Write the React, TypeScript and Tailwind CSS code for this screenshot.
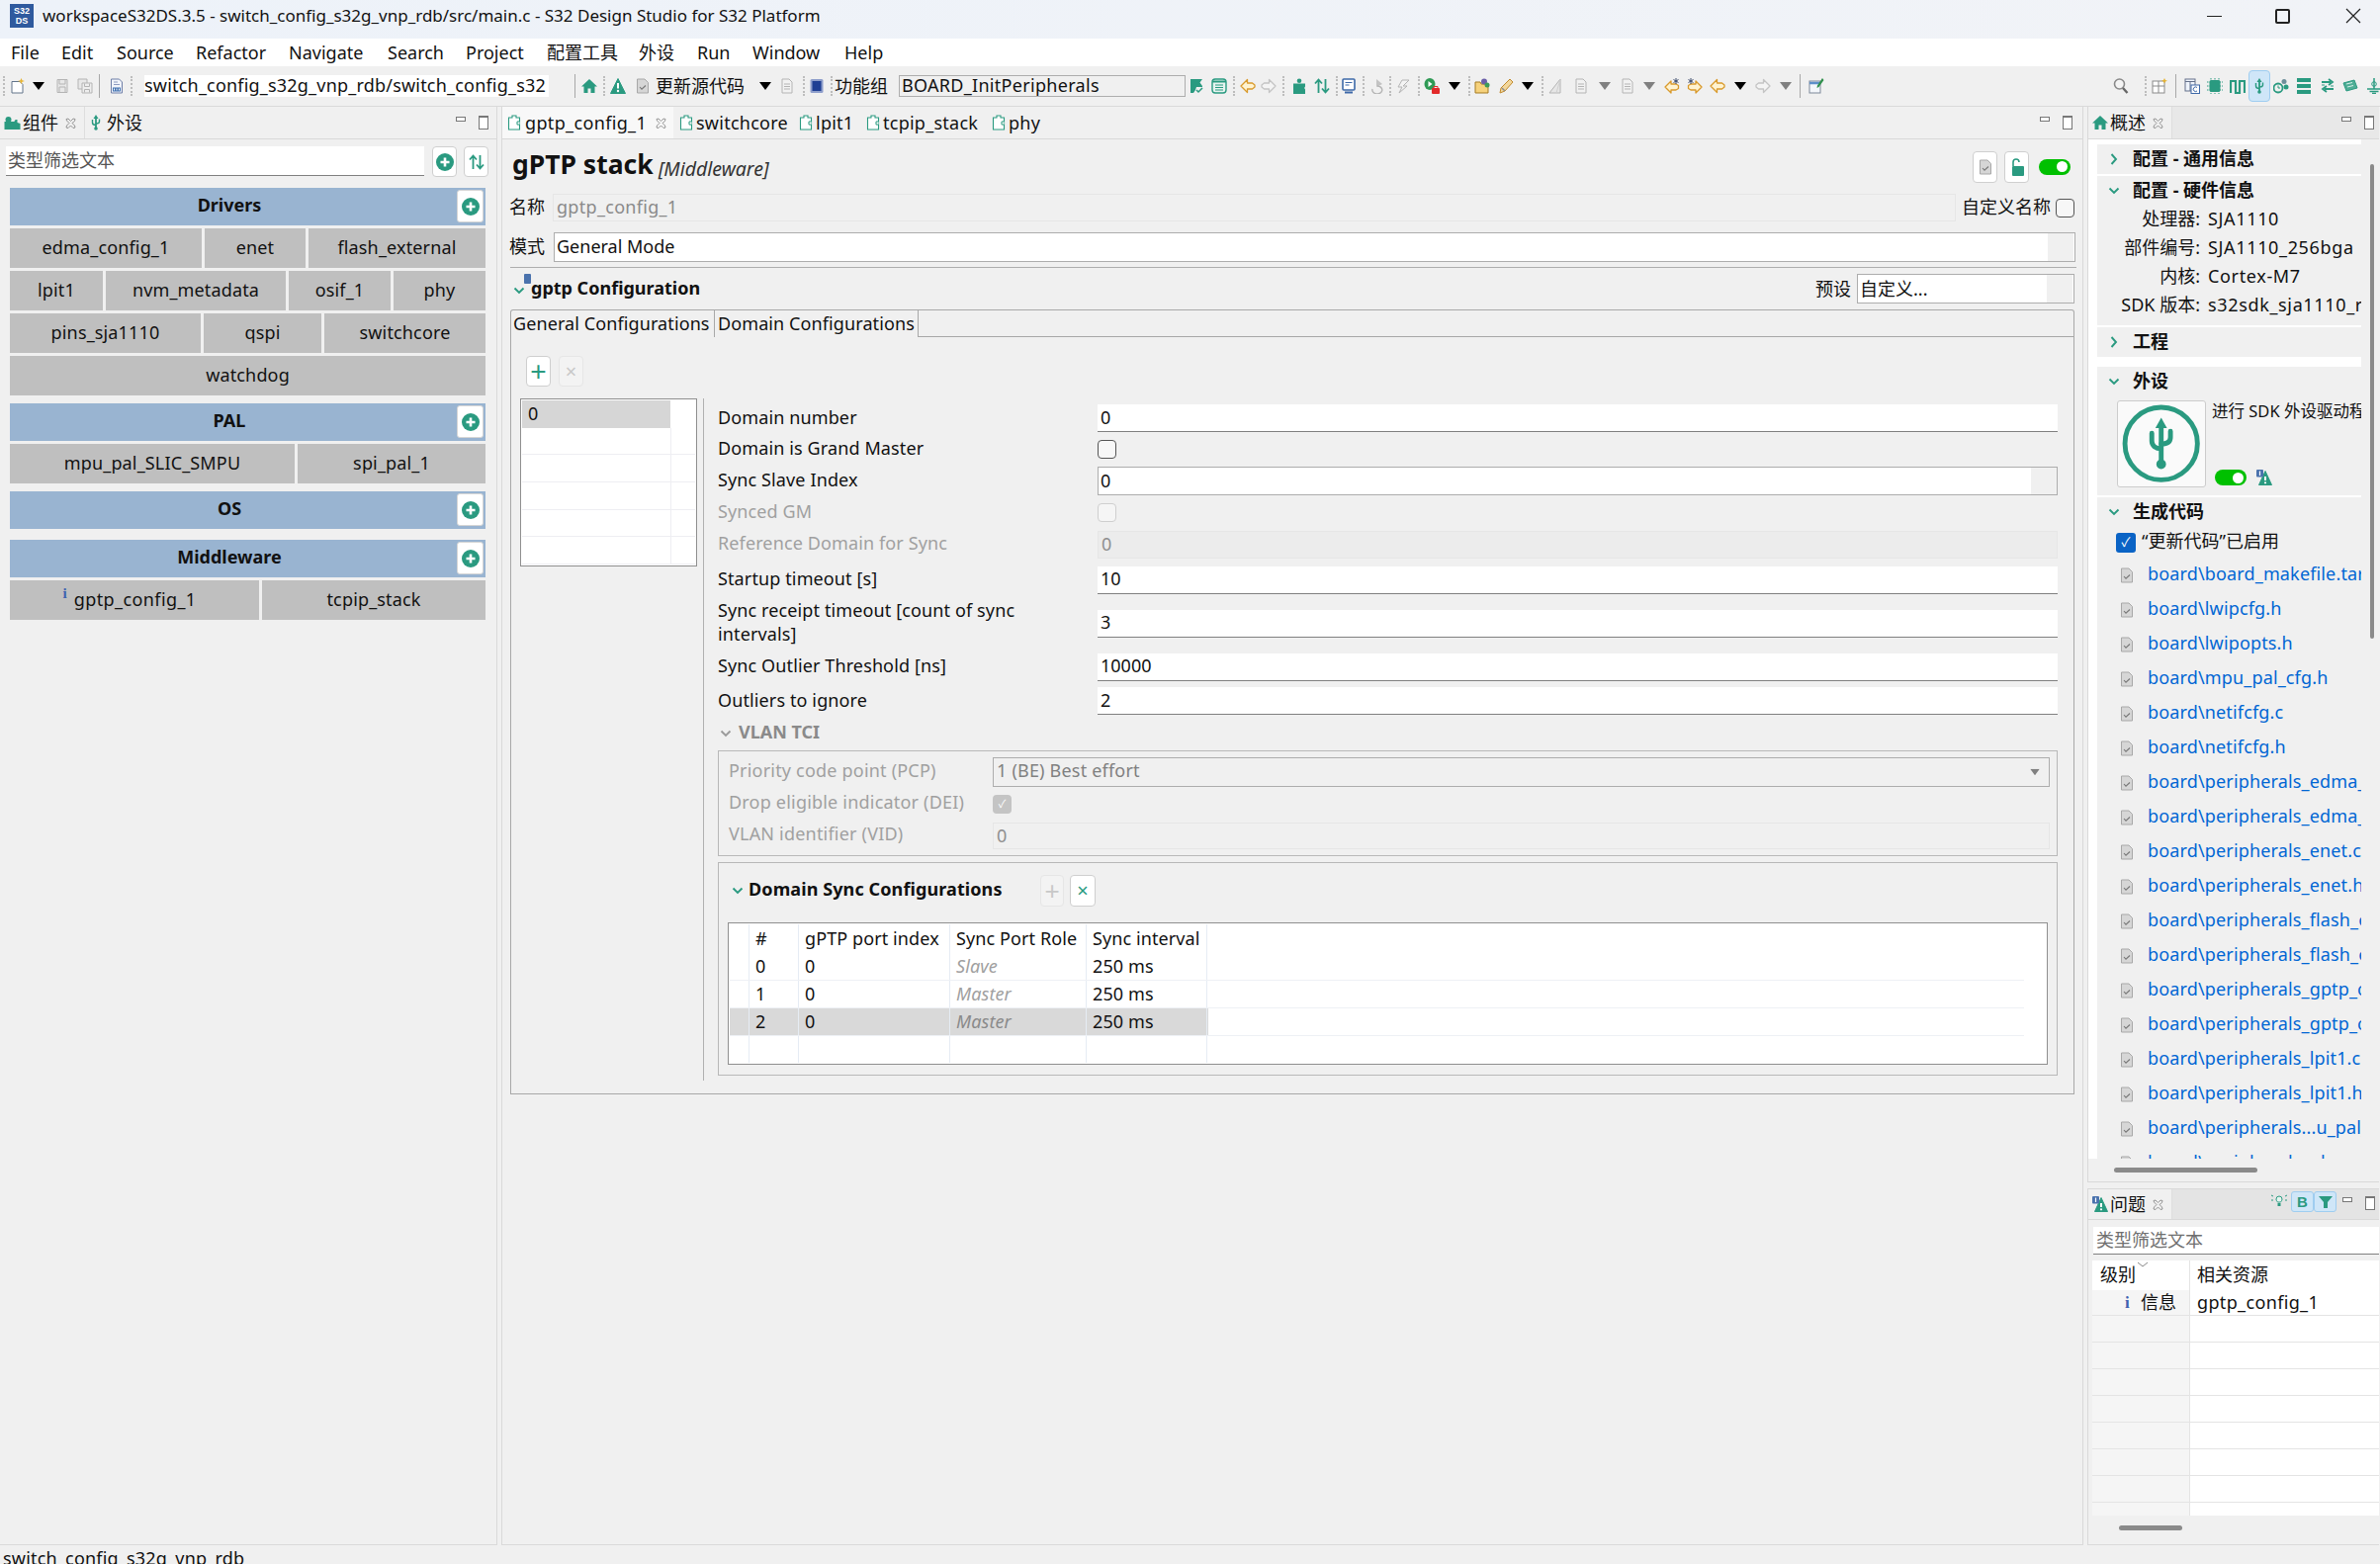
import React from "react";

const T = "#2a9a80";
const GR = "#b4b4b4";

type P = { className?: string };

const Grip = ({ className = "" }: P) => (
  <div className={`w-[2px] h-[20px] shrink-0 border-l-2 border-dotted border-[#bdbdbd] ${className}`} />
);
const Sep = ({ className = "" }: P) => <div className={`w-[1px] h-[24px] shrink-0 bg-[#a8a8a8] ${className}`} />;

const S = ({ className = "", children }: P & { children: React.ReactNode }) => (
  <svg viewBox="0 0 16 16" fill="none" className={`w-[16px] h-[16px] shrink-0 ${className}`}>
    {children}
  </svg>
);

const Drop = ({ className = "", color = "#000" }: P & { color?: string }) => (
  <svg viewBox="0 0 12 8" className={`w-[12px] h-[8px] shrink-0 ${className}`}>
    <polygon points="0,0 12,0 6,8" fill={color} />
  </svg>
);
const NewFile = ({ className }: P) => (
  <S className={className}>
    <path d="M2 3.5h8l3 3V15H2z" fill="#fff" stroke="#62758a" />
    <path d="M11.5 0l1 2.3 2.5.7-2.5.8-1 2.2-1-2.2L8 3l2.500-.7z" fill="#e6b433" />
  </S>
);
const Save = ({ className }: P) => (
  <S className={className}>
    <path d="M3 1.500h10v13H3z" fill="#e8e8e8" stroke={GR} />
    <path d="M5 2v4h6V2M5 14v-5h6v5" stroke={GR} />
  </S>
);
const SaveAll = ({ className }: P) => (
  <S className={className}>
    <path d="M1 1h9v10H1z" fill="#e8e8e8" stroke={GR} />
    <path d="M5 5h10v10H5z" fill="#eee" stroke={GR} />
    <path d="M7.500 5.500v3h5v-3M7.500 14.500v-3h5v3" stroke={GR} />
  </S>
);
const BinDoc = ({ className }: P) => (
  <S className={className}>
    <path d="M2.500 1h8l3 3v11h-11z" fill="#f1f4fa" stroke="#6f7fa8" />
    <path d="M5 4h4M5 6.500h6" stroke="#8d9bc0" />
    <path d="M4 9.500h8v4H4z" fill="#3d6fb0" />
    <path d="M5.500 10.500v2M8 10.500v2M10.500 10.500v2" stroke="#fff" />
  </S>
);
const Home = ({ className }: P) => (
  <S className={className}>
    <path d="M8 1L0 8.500h2.500V15h4v-4.500h3V15h4V8.500H16z" fill={T} />
  </S>
);
const Warn = ({ className }: P) => (
  <S className={className}>
    <path d="M8 0.500L15.500 15.500H0.500z" fill={T} stroke={T} strokeLinejoin="round" />
    <path d="M8 5v5.500" stroke="#fff" strokeWidth="2" />
    <circle cx="8" cy="13" r="1.200" fill="#fff" />
  </S>
);
const WarnInfo = ({ className }: P) => (
  <S className={className}>
    <path d="M9 1.500L15.500 15.500H2.500z" fill={T} stroke={T} strokeLinejoin="round" />
    <path d="M9 7v4" stroke="#fff" strokeWidth="2" />
    <circle cx="9" cy="13.300" r="1.100" fill="#fff" />
    <rect x="0" y="0" width="7" height="7.500" rx="1" fill="#4a72ad" />
    <path d="M3.500 1.500v4.500" stroke="#fff" strokeWidth="1.200" />
  </S>
);
const DocCheck = ({ className }: P) => (
  <S className={className}>
    <path d="M2.500 1h7.500l3.500 3.500V15h-11z" fill="#d6d6d6" stroke="#a8a8a8" />
    <path d="M5 9l2 2.200L11 7.500" stroke="#777" strokeWidth="1.100" />
  </S>
);
const DocGray = ({ className }: P) => (
  <S className={className}>
    <path d="M3 1h7l3 3v11H3z" fill="#f2f2f2" stroke={GR} />
    <path d="M5 6h6M5 8.500h6M5 11h6" stroke={GR} />
  </S>
);
const Chip = ({ className }: P) => (
  <S className={className}>
    <rect x="1.500" y="1" width="13" height="14" rx="1.500" fill="#8e9ecb" />
    <rect x="3.500" y="3" width="9" height="10" fill="#1f3f94" />
  </S>
);
const Flag = ({ className }: P) => (
  <S className={className}>
    <path d="M2 1h12l-2.500 3.500L14 8v1H8l-1 3-2 3H2z" fill={T} />
    <path d="M8 12l2 2 4-4" stroke={T} strokeWidth="1.500" />
  </S>
);
const ListDoc = ({ className }: P) => (
  <S className={className}>
    <rect x="1" y="1" width="14" height="14" rx="3" fill="#e7f4f0" stroke={T} strokeWidth="1.400" />
    <path d="M1 3.500h14" stroke={T} strokeWidth="2" />
    <path d="M4 7h8M4 9.500h8M4 12h8" stroke={T} />
  </S>
);
const Nav = ({ className = "", dir = "l", c = "#d99a2c", f = "#fff3d0" }: P & { dir?: "l" | "r"; c?: string; f?: string }) => (
  <S className={className}>
    <g transform={dir === "r" ? "translate(16 0) scale(-1 1)" : undefined}>
      <path d="M1 8l6.500-6.500V5h5L15 7v2l-2.500 2h-5v3.500z" fill={f} stroke={c} strokeWidth="1.300" strokeLinejoin="round" />
    </g>
  </S>
);
const NavStar = ({ className = "", dir = "l" }: P & { dir?: "l" | "r" }) => (
  <S className={className}>
    <g transform={dir === "r" ? "translate(16 0) scale(-1 1)" : undefined}>
      <path d="M1 9l6-6v3h5l2.500 1.500v3L12 12H7v3z" fill="#fff3d0" stroke="#d99a2c" strokeWidth="1.300" strokeLinejoin="round" />
      <path d="M12 0v6M9.500 1.500l5 3M14.500 1.500l-5 3" stroke="#3b4a6b" />
    </g>
  </S>
);
const Puzzle = ({ className }: P) => (
  <S className={className}>
    <circle cx="8" cy="2.800" r="2.300" fill={T} />
    <path d="M2 5.500h12v3a2 2 0 0 0 0 3V16H2z" fill={T} />
  </S>
);
const UpDown = ({ className, c = T }: P & { c?: string }) => (
  <S className={className}>
    <path d="M4.500 15V2M1 5.500L4.500 1.500 8 5.500" stroke={c} strokeWidth="1.800" />
    <path d="M11.500 1v13M8 10.500l3.500 4 3.500-4" stroke={c} strokeWidth="1.800" />
  </S>
);
const Monitor = ({ className }: P) => (
  <S className={className}>
    <rect x="2" y="1" width="12" height="11" rx="1" fill="#fff" stroke="#3e69a8" strokeWidth="1.600" />
    <path d="M4.500 4.500h7M4.500 7h4" stroke="#3e69a8" />
    <path d="M4 14.500h8" stroke="#3e69a8" strokeWidth="2" />
  </S>
);
const DebugGray = ({ className }: P) => (
  <S className={className}>
    <path d="M7 1l6 5-6 3z" fill="#c3c3c3" />
    <path d="M3 11a5 4 0 1 0 5-3" stroke={GR} strokeWidth="1.400" />
  </S>
);
const Bolt = ({ className }: P) => (
  <S className={className}>
    <path d="M7 2h7L8 8h4l-8 7 3-6H3z" fill="#f4f4f4" stroke={GR} />
  </S>
);
const RunIc = ({ className }: P) => (
  <S className={className}>
    <ellipse cx="6" cy="6" rx="5.500" ry="6" fill="#2f9a55" />
    <path d="M4.500 3l4 3-4 3z" fill="#fff" />
    <rect x="8" y="10" width="8" height="6" rx="1" fill="#e22a2a" />
    <path d="M10 10V8.500h4V10" stroke="#e22a2a" />
  </S>
);
const Folder = ({ className }: P) => (
  <S className={className}>
    <path d="M1 4h5l1 2h7v9H1z" fill="#f6d27c" stroke="#a57a20" />
    <circle cx="10" cy="3.500" r="3" fill="#6a5ea8" />
    <circle cx="13" cy="7" r="2.500" fill="#3c9a58" />
  </S>
);
const Pen = ({ className }: P) => (
  <S className={className}>
    <path d="M12 1l3 3-8 9-5 2 1-5z" fill="#f2d79c" stroke="#c28a2c" />
    <path d="M4 10l3 3" stroke="#8f8f8f" strokeWidth="1.500" />
  </S>
);
const Knife = ({ className }: P) => (
  <S className={className}>
    <path d="M13 1v14H2z" fill="#e6e6e6" stroke={GR} />
    <path d="M13 1L9 15" stroke="#cfcfcf" />
  </S>
);
const Persp = ({ className }: P) => (
  <S className={className}>
    <rect x="1" y="3" width="11" height="12" fill="#f4f7fb" stroke="#7c8798" />
    <path d="M1 5h11" stroke="#5d8fc9" strokeWidth="2.500" />
    <path d="M14 0l1.500 2-5 7-2 1 .5-2.500z" fill="#2f8f4c" />
  </S>
);
const Search = ({ className }: P) => (
  <S className={className}>
    <circle cx="6.500" cy="6" r="5" stroke="#8a8a8a" strokeWidth="1.600" fill="#f4f4f4" />
    <path d="M10 10l4.500 5" stroke="#666" strokeWidth="2.400" />
  </S>
);
const Layout = ({ className }: P) => (
  <S className={className}>
    <rect x="1" y="3" width="12" height="12" fill="#fff" stroke="#8a8a8a" />
    <path d="M1 8h12M7 3v12" stroke="#8a8a8a" />
    <path d="M13 0l1 2 2 .8-2 .7-1 2-1-2-2-.7 2-.8z" fill="#e6b433" />
  </S>
);
const CDoc = ({ className }: P) => (
  <S className={className}>
    <rect x="1" y="1" width="10" height="12" fill="#eef3fb" stroke="#64708a" />
    <path d="M1 3.500h10M6 3.500V13" stroke="#64708a" />
    <rect x="7" y="7" width="8.500" height="8.500" fill="#fff" stroke="#3e69a8" />
    <path d="M13 9.500a2.300 2.300 0 1 0 0 3.500" stroke="#3e69a8" />
  </S>
);
const ChipT = ({ className }: P) => (
  <S className={className}>
    <path d="M0 4h16M0 8h16M0 12h16M4 0v16M8 0v16M12 0v16" stroke={T} strokeDasharray="1.500 1" />
    <rect x="2.500" y="2" width="11" height="12" rx="2" fill={T} />
  </S>
);
const Pulse = ({ className }: P) => (
  <S className={className}>
    <path d="M1 15V3h5v12h4V3h5v12" stroke={T} strokeWidth="2.200" />
  </S>
);
const UsbT = ({ className }: P) => (
  <S className={className}>
    <path d="M8 0l2.500 4h-5z" fill={T} />
    <path d="M8 3v11" stroke={T} strokeWidth="1.800" />
    <circle cx="8" cy="14" r="1.800" fill={T} />
    <path d="M4.500 5v3c0 1.500 1.500 2.500 3.500 2.500M11.500 4.500V7c0 1.500-1.500 2-3.500 2" stroke={T} strokeWidth="1.400" />
  </S>
);
const Timer = ({ className }: P) => (
  <S className={className}>
    <circle cx="5" cy="10" r="4.500" stroke={T} strokeWidth="1.800" />
    <path d="M5 7.500V10h2" stroke={T} />
    <circle cx="11" cy="3.500" r="2.500" fill="#6d8f9a" />
    <circle cx="13" cy="9" r="2.500" fill={T} />
  </S>
);
const Stack = ({ className }: P) => (
  <S className={className}>
    <path d="M1 0h14v4H1zM1 6h14v4H1zM1 12h14v4H1z" fill={T} />
  </S>
);
const Arrows = ({ className }: P) => (
  <S className={className}>
    <path d="M2 4h9M9 1l4 3-4 3M14 11H5M7 8l-4 3 4 3" stroke={T} strokeWidth="1.800" />
    <path d="M2 7h3M11 8h3" stroke={T} />
  </S>
);
const Board = ({ className }: P) => (
  <S className={className}>
    <path d="M1 5l11-3 3 8-11 3z" fill="#4fae96" stroke={T} />
    <path d="M4 6l6-1.500M5 9l6-1.500" stroke="#d8f0ea" />
  </S>
);
const Ground = ({ className }: P) => (
  <S className={className}>
    <path d="M8 0v11M1 11h14M3.500 13.500h9M6 15.500h4" stroke={T} strokeWidth="1.500" />
    <circle cx="8" cy="6" r="2.300" stroke={T} />
  </S>
);
const PuzzleDoc = ({ className = "" }: P) => (
  <S className={className}>
    <path d="M2.500 3h3.500V1h4v2h3.500v12h-11z" fill="#fff" stroke={T} strokeWidth="1.100" />
    <path d="M13.500 7h-2.500v3h2.500" fill="#fff" stroke={T} strokeWidth="1" />
  </S>
);
const Components = ({ className }: P) => (
  <S className={className}>
    <circle cx="4" cy="5" r="3" fill={T} />
    <path d="M0 7h10a2 2 0 0 1 2-2h1v3l3 1v6H0z" fill={T} />
  </S>
);
const Close = ({ className = "" }: P) => (
  <svg viewBox="0 0 11 11" fill="none" className={`w-[11px] h-[11px] shrink-0 ${className}`}>
    <path d="M1 1.500l2-.5 2.500 2.500L8 1l2 .5-.5 2L7 5.500 9.500 8l.5 2-2 .5L5.500 8 3 10.500 1 10l.5-2L4 5.500 1.500 3z" stroke="#8a8a8a" strokeWidth=".9" />
  </svg>
);
const Plus = ({ className = "" }: P) => (
  <svg viewBox="0 0 18 18" className={`w-[18px] h-[18px] shrink-0 ${className}`}>
    <circle cx="9" cy="9" r="9" fill={T} />
    <path d="M9 4.500v9M4.500 9h9" stroke="#fff" strokeWidth="2.600" />
  </svg>
);
const Chev = ({ open = true, c = T, className = "" }: P & { open?: boolean; c?: string }) => (
  <svg viewBox="0 0 12 12" fill="none" className={`w-[12px] h-[12px] shrink-0 ${className}`}>
    <path d={open ? "M1.500 3.500L6 8l4.500-4.500" : "M3.500 1L8 6l-4.500 5"} stroke={c} strokeWidth="1.900" />
  </svg>
);

const PanelBtns = ({ className = "" }: P) => (
  <div className={`flex items-start shrink-0 ${className}`}>
    <div className="w-[10px] h-[5px] border border-[#777] bg-white mt-[1px]" />
    <div className="w-[10px] h-[14px] border border-[#777] border-t-2 ml-[13px] bg-white" />
  </div>
);

const IconBtn = ({ className = "", children, off }: P & { children: React.ReactNode; off?: boolean }) => (
  <div
    className={`flex items-center justify-center shrink-0 rounded-[4px] border ${
      off ? "border-[#e6e6e6] bg-[#f3f3f3] text-[#c8c8c8]" : "border-[#cfcfcf] bg-white text-[#2a9a80]"
    } ${className}`}
  >
    {children}
  </div>
);

const Toggle = ({ className = "" }: P) => (
  <div className={`w-[32px] h-[16px] rounded-full bg-[#00c000] flex items-center justify-end pr-[3px] shrink-0 ${className}`}>
    <div className="w-[11px] h-[11px] rounded-full bg-white" />
  </div>
);

const menus = [
  ["File", "w-[51px]"],
  ["Edit", "w-[56px]"],
  ["Source", "w-[80px]"],
  ["Refactor", "w-[94px]"],
  ["Navigate", "w-[100px]"],
  ["Search", "w-[79px]"],
  ["Project", "w-[82px]"],
  ["配置工具", "w-[93px]"],
  ["外设", "w-[59px]"],
  ["Run", "w-[56px]"],
  ["Window", "w-[93px]"],
  ["Help", "w-[60px]"],
];

const Toolbar = () => (
  <div className="h-[40px] flex items-center pl-[3px] shrink-0 bg-[#f0f0f0] text-[18px] overflow-hidden">
    <Grip />
    <NewFile className="ml-[5px]" />
    <Drop className="ml-[7px]" />
    <Save className="ml-[10px]" />
    <SaveAll className="ml-[7px]" />
    <Sep className="ml-[6px]" />
    <BinDoc className="ml-[9px]" />
    <Grip className="ml-[6px]" />
    <div className="ml-[12px] w-[409px] h-[22px] shrink-0 bg-white flex items-center overflow-hidden whitespace-nowrap tracking-[0.2px] pb-[2px]">
      switch_config_s32g_vnp_rdb/switch_config_s32
    </div>
    <Sep className="ml-[26px]" />
    <Home className="ml-[6px]" />
    <Grip className="ml-[6px]" />
    <Warn className="ml-[5px]" />
    <DocCheck className="ml-[9px]" />
    <span className="ml-[5px] w-[90px] shrink-0 whitespace-nowrap">更新源代码</span>
    <Drop className="ml-[15px]" />
    <DocGray className="ml-[8px]" />
    <Grip className="ml-[8px]" />
    <Chip className="ml-[4px]" />
    <Grip className="ml-[6px]" />
    <span className="ml-[2px] w-[53px] shrink-0 whitespace-nowrap">功能组</span>
    <div className="ml-[12px] w-[290px] h-[22px] shrink-0 border border-[#adadad] bg-[#f0f0f0] flex items-center pl-[2px] overflow-hidden whitespace-nowrap tracking-[0.3px] pb-[2px]">
      BOARD_InitPeripherals
    </div>
    <Flag className="ml-[3px]" />
    <ListDoc className="ml-[7px]" />
    <Grip className="ml-[6px]" />
    <Nav className="ml-[5px]" />
    <Nav dir="r" c="#c4c4c4" f="#f4f4f4" className="ml-[5px]" />
    <Grip className="ml-[6px]" />
    <Puzzle className="ml-[7px]" />
    <UpDown className="ml-[7px]" />
    <Grip className="ml-[6px]" />
    <Monitor className="ml-[3px]" />
    <Grip className="ml-[6px]" />
    <DebugGray className="ml-[5px]" />
    <Grip className="ml-[4px]" />
    <Bolt className="ml-[4px]" />
    <Grip className="ml-[7px]" />
    <RunIc className="ml-[4px]" />
    <Drop className="ml-[9px]" />
    <Grip className="ml-[8px]" />
    <Folder className="ml-[4px]" />
    <Pen className="ml-[8px]" />
    <Drop className="ml-[8px]" />
    <Grip className="ml-[8px]" />
    <Knife className="ml-[4px]" />
    <DocGray className="ml-[10px]" />
    <Drop color="#808080" className="ml-[10px]" />
    <DocGray className="ml-[9px]" />
    <Drop color="#808080" className="ml-[8px]" />
    <NavStar className="ml-[9px]" />
    <NavStar dir="r" className="ml-[7px]" />
    <Nav className="ml-[7px]" />
    <Drop className="ml-[9px]" />
    <Nav dir="r" c="#c4c4c4" f="#f4f4f4" className="ml-[9px]" />
    <Drop color="#808080" className="ml-[9px]" />
    <Sep className="ml-[8px]" />
    <Persp className="ml-[8px]" />
    <Search className="ml-[292px]" />
    <Grip className="ml-[16px]" />
    <Layout className="ml-[5px]" />
    <Sep className="ml-[8px]" />
    <CDoc className="ml-[8px]" />
    <ChipT className="ml-[7px]" />
    <Pulse className="ml-[7px]" />
    <div className="ml-[3px] w-[22px] h-[32px] rounded-[4px] bg-[#cfe6f8] border border-[#9fcdf0] flex items-center justify-center shrink-0">
      <UsbT />
    </div>
    <Timer className="ml-[3px]" />
    <Stack className="ml-[7px]" />
    <Arrows className="ml-[8px]" />
    <Board className="ml-[7px]" />
    <Ground className="ml-[8px]" />
  </div>
);

const PanelHead = ({ children, right }: { children: React.ReactNode; right?: React.ReactNode }) => (
  <div className="h-[33px] flex items-stretch shrink-0 border-b border-[#d9d9d9] bg-[#f0f0f0] text-[18px]">
    {children}
    <div className="flex-1" />
    {right}
  </div>
);

const Header = ({ title }: { title: string }) => (
  <div className="h-[38px] bg-[#99b4d1] flex items-center relative font-bold text-[18px] pr-[37px] pb-[3px] justify-center">
    <span>{title}</span>
    <div className="absolute right-[2px] top-[2px] w-[27px] h-[33px] bg-white rounded-[3px] border border-[#d5d5d5] flex items-center justify-center">
      <Plus />
    </div>
  </div>
);

const ChipBox = ({ className = "", children }: P & { children: React.ReactNode }) => (
  <div className={`h-[40px] bg-[#bfbfbf] flex items-center justify-center text-[18px] pb-[2px] tracking-[0.15px] ${className}`}>{children}</div>
);

const LeftPanel = () => (
  <div className="w-[503px] flex flex-col shrink-0 border-r border-b border-[#d9d9d9]">
    <PanelHead right={<PanelBtns className="mt-[9px] mr-[8px]" />}>
      <div className="w-[85px] flex items-center pl-[4px] bg-[#f0f0f0]">
        <Components className="w-[17px] h-[16px]" />
        <span className="ml-[2px]">组件</span>
        <Close className="ml-[7px]" />
      </div>
      <div className="flex items-center pl-[3px] border-l border-[#dedede]">
        <UsbT />
        <span className="ml-[3px]">外设</span>
      </div>
    </PanelHead>
    <div className="flex items-start ml-[6px] mt-[7px]">
      <div className="w-[423px] h-[30px] bg-white border-b border-[#808080] flex items-center pl-[2px] text-[18px] text-[#555]">
        类型筛选文本
      </div>
      <IconBtn className="ml-[8px] w-[25px] h-[31px]">
        <Plus />
      </IconBtn>
      <IconBtn className="ml-[7px] w-[25px] h-[31px]">
        <UpDown />
      </IconBtn>
    </div>
    <div className="ml-[10px] w-[481px] mt-[11px] flex flex-col">
      <Header title="Drivers" />
      <div className="flex gap-[3px] mt-[3px]">
        <ChipBox className="w-[194px]">edma_config_1</ChipBox>
        <ChipBox className="w-[102px]">enet</ChipBox>
        <ChipBox className="flex-1">flash_external</ChipBox>
      </div>
      <div className="flex gap-[3px] mt-[3px]">
        <ChipBox className="w-[94px]">lpit1</ChipBox>
        <ChipBox className="w-[182px]">nvm_metadata</ChipBox>
        <ChipBox className="w-[103px]">osif_1</ChipBox>
        <ChipBox className="flex-1">phy</ChipBox>
      </div>
      <div className="flex gap-[3px] mt-[3px]">
        <ChipBox className="w-[193px]">pins_sja1110</ChipBox>
        <ChipBox className="w-[119px]">qspi</ChipBox>
        <ChipBox className="flex-1">switchcore</ChipBox>
      </div>
      <ChipBox className="mt-[3px]">watchdog</ChipBox>
      <div className="mt-[8px]">
        <Header title="PAL" />
      </div>
      <div className="flex gap-[3px] mt-[3px]">
        <ChipBox className="w-[288px]">mpu_pal_SLIC_SMPU</ChipBox>
        <ChipBox className="flex-1">spi_pal_1</ChipBox>
      </div>
      <div className="mt-[8px]">
        <Header title="OS" />
      </div>
      <div className="mt-[11px]">
        <Header title="Middleware" />
      </div>
      <div className="flex gap-[3px] mt-[3px]">
        <ChipBox className="w-[252px] pr-[10px]">
          <span className="font-['Liberation_Serif',serif] font-bold text-[#3f62b0] text-[15px] mr-[7px] mb-[12px]">i</span>
          <span className="tracking-[0.4px]">gptp_config_1</span>
        </ChipBox>
        <ChipBox className="flex-1">tcpip_stack</ChipBox>
      </div>
    </div>
  </div>
);

const EdTab = ({ name, className = "" }: P & { name: string }) => (
  <div className={`flex items-center shrink-0 ${className}`}>
    <PuzzleDoc />
    <span className="ml-[2px] tracking-[0.25px]">{name}</span>
  </div>
);

const Field = ({ children, gray }: { children?: React.ReactNode; gray?: boolean }) => (
  <div
    className={`w-[971px] h-[28px] flex items-center pl-[3px] pb-[1px] ${
      gray ? "bg-[#ececec] border border-[#e6e6e6] text-[#8f8f8f]" : "bg-white border-b border-[#808080]"
    }`}
  >
    {children}
  </div>
);

const Check = ({ off }: { off?: boolean }) => (
  <div className={`w-[19px] h-[19px] rounded-[4px] border ${off ? "border-[#cfcfcf] bg-[#f5f5f5]" : "border-[#555] bg-[#f7f7f7]"}`} />
);

const Row = ({ h, label, off, children }: { h: string; label: React.ReactNode; off?: boolean; children: React.ReactNode }) => (
  <div className={`flex items-center ${h}`}>
    <div className={`w-[384px] leading-[24px] pb-[3px] tracking-[0.12px] ${off ? "text-[#a0a0a0]" : ""}`}>{label}</div>
    {children}
  </div>
);

const rows = [
  { i: "0", p: "0", r: "Slave", s: "250 ms", sel: false },
  { i: "1", p: "0", r: "Master", s: "250 ms", sel: false },
  { i: "2", p: "0", r: "Master", s: "250 ms", sel: true },
];

const SyncTable = () => (
  <div className="ml-[9px] mt-[16px] w-[1335px] h-[144px] border border-[#8f8f8f] bg-white p-[1px] flex flex-col text-[18px] tracking-[0.1px]">
    <div className="h-[30px] flex items-center">
      <div className="w-[19px] h-full" />
      <div className="w-[50px] h-full flex items-center pl-[6px] border-l border-[#e6ecf4]">#</div>
      <div className="w-[153px] h-full flex items-center pl-[6px] border-l border-[#e6ecf4] whitespace-nowrap">gPTP port index</div>
      <div className="w-[138px] h-full flex items-center pl-[6px] border-l border-[#e6ecf4] whitespace-nowrap">Sync Port Role</div>
      <div className="w-[123px] h-full flex items-center pl-[6px] border-l border-[#e6ecf4] border-r whitespace-nowrap">Sync interval</div>
    </div>
    {rows.map((r) => (
      <div key={r.i} className="h-[28px] flex items-center w-[1309px] border-b border-[#eef1f5]">
        <div className={`h-full flex items-center w-[484px] ${r.sel ? "bg-[#d9d9d9]" : ""}`}>
          <div className="w-[19px] h-full" />
          <div className="w-[50px] h-full flex items-center pl-[6px] border-l border-[#e6ecf4]">{r.i}</div>
          <div className="w-[153px] h-full flex items-center pl-[6px] border-l border-[#e6ecf4]">{r.p}</div>
          <div className={`w-[138px] h-full flex items-center pl-[6px] border-l border-[#e6ecf4] italic ${r.sel ? "text-[#8a8a8a]" : "text-[#a0a0a0]"}`}>{r.r}</div>
          <div className="w-[123px] h-full flex items-center pl-[6px] border-l border-[#e6ecf4] border-r">{r.s}</div>
        </div>
      </div>
    ))}
    <div className="h-[27px] flex">
      <div className="w-[19px] h-full" />
      <div className="w-[50px] h-full border-l border-[#e6ecf4]" />
      <div className="w-[153px] h-full border-l border-[#e6ecf4]" />
      <div className="w-[138px] h-full border-l border-[#e6ecf4]" />
      <div className="w-[123px] h-full border-l border-r border-[#e6ecf4]" />
    </div>
  </div>
);

const CenterPanel = () => (
  <div className="w-[1600px] ml-[4px] flex flex-col shrink-0 border-x border-b border-[#d9d9d9] text-[18px]">
    <PanelHead right={<PanelBtns className="mt-[9px] mr-[10px]" />}>
      <div className="w-[173px] shrink-0 flex items-center pl-[4px] bg-[#f8f8f8]">
        <PuzzleDoc />
        <span className="ml-[3px] tracking-[0.35px]">gptp_config_1</span>
        <Close className="ml-[9px]" />
      </div>
      <EdTab name="switchcore" className="ml-[5px] w-[121px]" />
      <EdTab name="lpit1" className="w-[68px]" />
      <EdTab name="tcpip_stack" className="w-[127px]" />
      <EdTab name="phy" />
    </PanelHead>
    <div className="h-[55px] flex items-center pl-[10px] pr-[12px]">
      <span className="font-bold text-[26.5px] pb-[3px]">gPTP stack</span>
      <span className="italic text-[19.5px] ml-[5px] mt-[5px] text-[#333]">[Middleware]</span>
      <div className="flex-1" />
      <IconBtn className="w-[25px] h-[32px]">
        <DocCheck />
      </IconBtn>
      <IconBtn className="w-[25px] h-[32px] ml-[7px]">
        <svg viewBox="0 0 14 18" className="w-[14px] h-[18px]" fill="none">
          <path d="M3 8V4a3 3 0 0 1 6 0" stroke={T} strokeWidth="1.600" />
          <rect x="2" y="8" width="12" height="10" rx="1" fill={T} />
        </svg>
      </IconBtn>
      <Toggle className="ml-[10px]" />
    </div>
    <div className="flex items-center h-[28px] pl-[7px]">
      <span className="w-[44px] pb-[2px]">名称</span>
      <div className="w-[1419px] h-[28px] border border-[#e6e6e6] flex items-center pl-[3px] text-[#8a8a8a] tracking-[0.3px] pb-[2px]">gptp_config_1</div>
      <span className="ml-[6px] whitespace-nowrap pb-[2px]">自定义名称</span>
      <div className="ml-[5px] w-[19px] h-[19px] rounded-[4px] border border-[#555] bg-[#f7f7f7]" />
    </div>
    <div className="flex items-center h-[30px] mt-[11px] pl-[7px]">
      <span className="w-[45px] pb-[2px]">模式</span>
      <div className="w-[1539px] h-[30px] border border-[#adadad] bg-white flex items-center pl-[2px] pr-[1px]">
        <span className="flex-1 pb-[2px]">General Mode</span>
        <div className="w-[26px] h-full bg-[#f0f0f0]" />
      </div>
    </div>
    <div className="h-[1px] bg-[#adadad] mt-[5px] ml-[8px] w-[1584px]" />
    <div className="flex items-center h-[30px] mt-[6px] pl-[11px]">
      <div className="relative w-[16px] h-[16px]">
        <Chev className="absolute left-0 top-[4px]" />
        <span className="absolute left-[11px] top-[-7px] w-[7px] h-[10px] bg-[#4a72ad] rounded-[1px]" />
      </div>
      <span className="font-bold ml-[2px] pb-[1px]">gptp Configuration</span>
      <div className="flex-1" />
      <span>预设</span>
      <div className="ml-[6px] mr-[8px] w-[220px] h-[30px] border border-[#adadad] bg-white flex items-center pl-[2px] pr-[1px]">
        <span className="flex-1">自定义...</span>
        <div className="w-[26px] h-full bg-[#f0f0f0]" />
      </div>
    </div>
    <div className="ml-[8px] w-[1582px] mt-[6px] h-[794px] flex flex-col">
      <div className="h-[28px] flex items-stretch">
        <div className="w-[207px] border border-b-0 border-[#a8a8a8] rounded-tl-[3px] flex items-center pl-[2px] whitespace-nowrap bg-[#f0f0f0] tracking-[0.1px]">General Configurations</div>
        <div className="w-[206px] border-t border-r border-[#a8a8a8] flex items-center pl-[3px] whitespace-nowrap bg-[#f0f0f0] tracking-[0.1px]">Domain Configurations</div>
        <div className="flex-1 border-t border-b border-r border-[#a8a8a8] rounded-tr-[3px]" />
      </div>
      <div className="h-[766px] border-x border-b border-[#a8a8a8] flex flex-col">
        <div className="flex ml-[15px] mt-[19px]">
          <IconBtn className="w-[25px] h-[31px]">
            <span className="text-[28px] leading-none font-light text-[#2a9a80] font-['Liberation_Sans',sans-serif]">+</span>
          </IconBtn>
          <IconBtn off className="w-[25px] h-[31px] ml-[8px]">
            <span className="text-[20px] leading-none">×</span>
          </IconBtn>
        </div>
        <div className="flex mt-[12px]">
          <div className="ml-[9px] w-[179px] h-[170px] border border-[#8f8f8f] bg-white p-[1px] flex flex-col">
            <div className="h-[28px] w-[150px] bg-[#d6d6d6] flex items-center pl-[6px]">0</div>
            {[0, 1, 2, 3, 4].map((i) => (
              <div key={i} className="h-[28px] border-b border-[#eeeef2] flex justify-end">
                <div className="w-[25px] border-l border-[#eeeef2]" />
              </div>
            ))}
          </div>
          <div className="ml-[6px] w-[1px] h-[690px] bg-[#b0b0b0]" />
          <div className="ml-[14px] w-[1355px] flex flex-col pt-[4px]">
            <Row h="h-[32px]" label="Domain number">
              <Field>0</Field>
            </Row>
            <Row h="h-[30px]" label="Domain is Grand Master">
              <Check />
            </Row>
            <Row h="h-[35px]" label="Sync Slave Index">
              <div className="w-[971px] h-[29px] border border-[#adadad] bg-white flex items-center pl-[2px] pb-[1px]">
                <span className="flex-1">0</span>
                <div className="w-[26px] h-[27px] mb-[-1px] bg-[#f0f0f0]" />
              </div>
            </Row>
            <Row h="h-[29px]" label="Synced GM" off>
              <Check off />
            </Row>
            <Row h="h-[35px]" label="Reference Domain for Sync" off>
              <Field gray>0</Field>
            </Row>
            <Row h="h-[37px]" label="Startup timeout [s]">
              <Field>10</Field>
            </Row>
            <Row h="h-[51px]" label={<>Sync receipt timeout [count of sync<br />intervals]</>}>
              <Field>3</Field>
            </Row>
            <Row h="h-[37px]" label="Sync Outlier Threshold [ns]">
              <Field>10000</Field>
            </Row>
            <Row h="h-[32px]" label="Outliers to ignore">
              <Field>2</Field>
            </Row>
            <div className="h-[34px] flex items-center pl-[2px] text-[#8a8a8a]">
              <Chev c="#9a9a9a" />
              <span className="ml-[7px] font-bold pb-[3px]">VLAN TCI</span>
            </div>
            <div className="h-[107px] border border-[#b8b8b8] pl-[10px] flex flex-col pt-[5px] text-[#a0a0a0] tracking-[0.2px]">
              <div className="h-[32px] flex items-center">
                <span className="w-[267px] pb-[3px]">Priority code point (PCP)</span>
                <div className="w-[1069px] h-[30px] border border-[#adadad] bg-[#f0f0f0] flex items-center pl-[3px] pr-[8px] text-[#808080]">
                  <span className="flex-1 pb-[3px]">1 (BE) Best effort</span>
                  <Drop color="#808080" className="scale-[.8]" />
                </div>
              </div>
              <div className="h-[32px] flex items-center">
                <span className="w-[267px] pb-[3px]">Drop eligible indicator (DEI)</span>
                <div className="w-[19px] h-[19px] rounded-[4px] bg-[#c4c4c4] flex items-center justify-center text-white text-[11px]">✓</div>
              </div>
              <div className="h-[32px] flex items-center">
                <span className="w-[267px] pb-[3px]">VLAN identifier (VID)</span>
                <div className="w-[1069px] h-[27px] border border-[#e6e6e6] flex items-center pl-[3px] text-[#8f8f8f]">0</div>
              </div>
            </div>
            <div className="h-[216px] mt-[6px] border border-[#b8b8b8] flex flex-col">
              <div className="flex items-center mt-[12px] h-[32px] pl-[13px]">
                <Chev className="w-[10px] h-[10px]" />
                <span className="ml-[5px] w-[295px] font-bold whitespace-nowrap pb-[3px] tracking-[0.1px]">Domain Sync Configurations</span>
                <IconBtn off className="w-[24px] h-[32px]">
                  <span className="text-[26px] leading-none font-['Liberation_Sans',sans-serif]">+</span>
                </IconBtn>
                <IconBtn className="w-[26px] h-[32px] ml-[6px]">
                  <span className="text-[20px] leading-none text-[#2a9a80]">×</span>
                </IconBtn>
              </div>
              <SyncTable />
            </div>
          </div>
        </div>
      </div>
    </div>
  </div>
);

const Section = ({ className = "", children }: P & { children: React.ReactNode }) => (
  <div className={`bg-[#f0f0f0] overflow-hidden shrink-0 flex flex-col ${className}`}>{children}</div>
);

const SecTitle = ({ open = true, title, className = "" }: { open?: boolean; title: string; className?: string }) => (
  <div className={`flex items-center h-[30px] shrink-0 font-bold ${className}`}>
    <Chev open={open} className="ml-[11px]" />
    <span className="ml-[13px] whitespace-nowrap pb-[2px]">{title}</span>
  </div>
);

const InfoLine = ({ k, v }: { k: string; v: string }) => (
  <div className="h-[29px] flex items-center whitespace-nowrap pb-[2px]">
    <span className="w-[104px] shrink-0 text-right">{k}:</span>
    <span className="ml-[8px] shrink-0 tracking-[0.65px]">{v}</span>
  </div>
);

const files = [
  "board\\board_makefile.tar",
  "board\\lwipcfg.h",
  "board\\lwipopts.h",
  "board\\mpu_pal_cfg.h",
  "board\\netifcfg.c",
  "board\\netifcfg.h",
  "board\\peripherals_edma_c",
  "board\\peripherals_edma_h",
  "board\\peripherals_enet.c",
  "board\\peripherals_enet.h",
  "board\\peripherals_flash_e",
  "board\\peripherals_flash_e",
  "board\\peripherals_gptp_c",
  "board\\peripherals_gptp_c",
  "board\\peripherals_lpit1.c",
  "board\\peripherals_lpit1.h",
  "board\\peripherals...u_pal_",
  "board\\peripherals_phy.c",
];

const RightPanel = () => (
  <div className="w-[295px] ml-[4px] flex flex-col shrink-0 text-[18px]">
    <div className="h-[1089px] flex flex-col border-l border-b border-[#d9d9d9]">
      <div className="h-[33px] flex bg-[#e8e8e8] border-b border-[#d9d9d9] shrink-0">
        <div className="w-[85px] bg-[#f0f0f0] flex items-center pl-[4px] border-r border-[#dedede]">
          <Home />
          <span className="ml-[2px]">概述</span>
          <Close className="ml-[7px]" />
        </div>
        <div className="flex-1" />
        <PanelBtns className="mt-[9px] mr-[5px]" />
      </div>
      <div className="h-[1031px] flex shrink-0">
        <div className="w-[276px] bg-white pl-[9px] pt-[5px] flex flex-col overflow-hidden">
          <Section className="h-[30px]">
            <SecTitle open={false} title="配置 - 通用信息" />
          </Section>
          <Section className="h-[151px] mt-[2px]">
            <SecTitle title="配置 - 硬件信息" />
            <InfoLine k="处理器" v="SJA1110" />
            <InfoLine k="部件编号" v="SJA1110_256bga" />
            <InfoLine k="内核" v="Cortex-M7" />
            <InfoLine k="SDK 版本" v="s32sdk_sja1110_rtm" />
          </Section>
          <Section className="h-[30px] mt-[2px]">
            <SecTitle open={false} title="工程" />
          </Section>
          <Section className="h-[130px] mt-[10px]">
            <SecTitle title="外设" />
            <div className="flex mt-[4px] ml-[20px]">
              <div className="w-[90px] h-[88px] rounded-[3px] border border-[#cccccc] bg-[#fafafa] shrink-0">
                <svg viewBox="0 0 90 88" fill="none" className="w-full h-full">
                  <circle cx="44.700" cy="43.700" r="37.500" stroke={T} strokeWidth="5" />
                  <path d="M44.700 17l6 10.500h-12z" fill={T} />
                  <path d="M44.700 25v40" stroke={T} strokeWidth="5" />
                  <circle cx="44.700" cy="65" r="5" fill={T} />
                  <path d="M35 33v8c0 5 4 8 9.700 8M54.300 31v6c0 5-4 7-9.600 7" stroke={T} strokeWidth="5" strokeLinecap="round" />
                </svg>
              </div>
              <div className="ml-[6px] flex flex-col">
                <span className="whitespace-nowrap text-[16.500px] leading-[22px]">进行 SDK 外设驱动程序配置</span>
                <div className="flex items-center mt-[48px] ml-[3px]">
                  <Toggle />
                  <WarnInfo className="ml-[10px]" />
                </div>
              </div>
            </div>
          </Section>
          <Section className="h-[669px] mt-[2px]">
            <SecTitle title="生成代码" />
            <div className="flex items-center h-[29px] ml-[19px] mt-[1px]">
              <div className="w-[20px] h-[20px] rounded-[3px] bg-[#0a63c5] flex items-center justify-center text-white text-[13px]">✓</div>
              <span className="ml-[6px] whitespace-nowrap pb-[2px]">“更新代码”已启用</span>
            </div>
            <div className="flex flex-col mt-[1px]">
              {files.map((f, i) => (
                <div key={i} className="h-[35px] shrink-0 flex items-center whitespace-nowrap">
                  <DocCheck className="ml-[22px] w-[14px] h-[15px]" />
                  <span className="ml-[13px] text-[#0066d4] pb-[3px] tracking-[0.15px]">{f}</span>
                </div>
              ))}
            </div>
          </Section>
        </div>
        <div className="flex-1 pt-[25px]">
          <div className="ml-[9px] w-[4px] h-[480px] rounded-full bg-[#8a8a8a]" />
        </div>
      </div>
      <div className="flex-1 pl-[26px] pt-[9px]">
        <div className="w-[145px] h-[5px] rounded-full bg-[#8a8a8a]" />
      </div>
    </div>
    <div className="h-[361px] mt-[6px] flex flex-col border-l border-b border-t border-[#d9d9d9]">
      <div className="h-[31px] flex bg-[#e4e4e4] border-b border-[#d9d9d9] shrink-0">
        <div className="w-[85px] bg-[#f0f0f0] flex items-center pl-[4px] border-r border-[#dedede]">
          <WarnInfo />
          <span className="ml-[2px]">问题</span>
          <Close className="ml-[7px]" />
        </div>
        <div className="flex-1" />
        <svg viewBox="0 0 16 16" fill="none" className="w-[16px] h-[16px] mt-[3px]">
          <path d="M5 7a3 3 0 1 1 6 0c0 1.500-1 2-1.500 3h-3C6 9 5 8.500 5 7z" fill="#e7f4f0" stroke={T} />
          <path d="M6.500 11h3v3h-3z" fill={T} />
          <path d="M0 3l2 1M16 3l-2 1M0 8h2M14 8h2M8 0v0" stroke={T} />
        </svg>
        <div className="ml-[4px] w-[23px] h-[21px] rounded-[3px] bg-[#cfe6f8] border border-[#9fcdf0] flex items-center justify-center font-bold text-[15px] text-[#2a9a80] mt-[2px] font-['Liberation_Sans',sans-serif]">B</div>
        <div className="w-[23px] h-[21px] rounded-[3px] bg-[#cfe6f8] border border-[#9fcdf0] flex items-center justify-center mt-[2px]">
          <svg viewBox="0 0 14 14" className="w-[14px] h-[14px]">
            <path d="M0 1h14L9 7v6H5V7z" fill={T} />
          </svg>
        </div>
        <PanelBtns className="ml-[6px] mt-[7px] mr-[4px]" />
      </div>
      <div className="ml-[5px] mt-[7px] h-[28px] bg-white border-b border-[#808080] flex items-center pl-[3px] text-[#707070]">类型筛选文本</div>
      <div className="ml-[4px] mt-[6px] flex flex-col">
        <div className="h-[30px] flex bg-white relative">
          <div className="w-[99px] flex items-center pl-[8px] border-r border-[#e4e4e4] pb-[1px]">级别</div>
          <div className="flex items-center pl-[7px] pb-[1px]">相关资源</div>
          <svg viewBox="0 0 12 6" fill="none" className="absolute left-[45px] top-[1px] w-[12px] h-[6px]">
            <path d="M1 1l5 4 5-4" stroke="#888" />
          </svg>
        </div>
        <div className="h-[26px] flex border-b border-[#e4e4e4]">
          <div className="w-[99px] bg-[#f5f5f5] flex items-center border-r border-[#e4e4e4] pl-[33px]">
            <span className="font-['Liberation_Serif',serif] font-bold text-[#3f62b0] text-[17px] w-[16px]">i</span>
            信息
          </div>
          <div className="flex-1 bg-white flex items-center pl-[7px] tracking-[0.35px]">gptp_config_1</div>
        </div>
        {[0, 1, 2, 3, 4, 5, 6, 7].map((i) => (
          <div key={i} className={`flex border-b border-[#e4e4e4] ${i === 7 ? "h-[13px] border-b-0" : "h-[27px]"}`}>
            <div className="w-[99px] bg-[#f5f5f5] border-r border-[#e4e4e4]" />
            <div className="flex-1 bg-white" />
          </div>
        ))}
      </div>
      <div className="ml-[31px] mt-[10px] w-[64px] h-[5px] rounded-full bg-[#8a8a8a]" />
    </div>
  </div>
);

export default function App() {
  return (
    <div className="w-[2407px] h-[1582px] overflow-hidden flex flex-col bg-[#f0f0f0] text-[#111] font-['Noto_Sans','Noto_Sans_CJK_SC',sans-serif] text-[18px]">
      <div className="h-[39px] flex items-center shrink-0 bg-gradient-to-r from-[#edf2f9] to-[#f1f3f7] pl-[10px] pb-[7px]">
        <div className="w-[24px] h-[24px] bg-[#2f5a9e] text-white text-[9px] leading-[10px] font-bold flex items-center justify-center text-center shrink-0 font-['Liberation_Sans',sans-serif]">
          S32
          <br />
          DS
        </div>
        <span className="ml-[9px] text-[17px] whitespace-nowrap">workspaceS32DS.3.5 - switch_config_s32g_vnp_rdb/src/main.c - S32 Design Studio for S32 Platform</span>
        <div className="flex-1" />
        <div className="w-[15px] h-[1px] bg-[#222] mr-[54px]" />
        <div className="w-[15px] h-[15px] border-2 border-[#222] rounded-[2px] mr-[56px]" />
        <svg viewBox="0 0 16 16" fill="none" className="w-[16px] h-[16px] mr-[19px]">
          <path d="M1 1l14 14M15 1L1 15" stroke="#222" strokeWidth="1.200" />
        </svg>
      </div>
      <div className="h-[28px] flex items-center pl-[11px] bg-white shrink-0 text-[18px]">
        {menus.map(([m, w]) => (
          <span key={m} className={`${w} whitespace-nowrap`}>
            {m}
          </span>
        ))}
      </div>
      <Toolbar />
      <div className="flex h-[1456px] shrink-0 border-t border-[#d9d9d9]">
        <LeftPanel />
        <CenterPanel />
        <RightPanel />
      </div>
      <div className="flex-1 overflow-hidden pl-[3px] pt-[1px] text-[18px] leading-[24px] tracking-[0.2px]">switch_config_s32g_vnp_rdb</div>
    </div>
  );
}
